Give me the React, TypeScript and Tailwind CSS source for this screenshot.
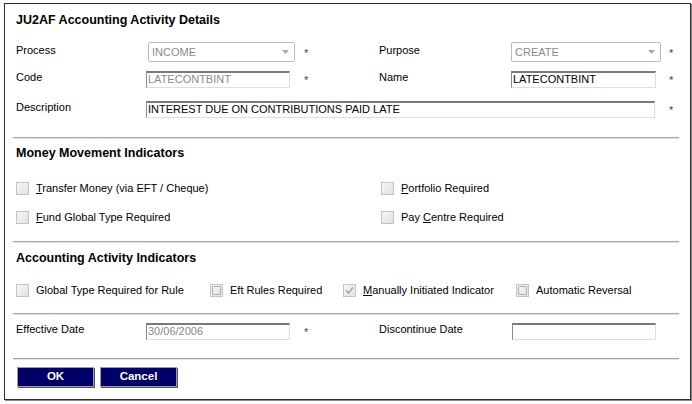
import React from "react";

const font = { fontFamily: '"Liberation Sans", Arial, sans-serif' };

function Star() {
  return <span className="text-[11px] leading-none text-[#444]">*</span>;
}

function Select({ value, w }: { value: string; w: string }) {
  return (
    <div className={`${w} h-[20px] flex items-center justify-between rounded-[2px] border border-[#bcbcbc] bg-white pl-[3px] pr-[5px]`}>
      <span className="text-[11px] text-[#8a8a8a]">{value}</span>
      <svg width="7" height="4" viewBox="0 0 7 4">
        <path d="M0 0 L7 0 L3.5 4 Z" fill="#a8a8a8" />
      </svg>
    </div>
  );
}

function Input({ value, w, disabled }: { value?: string; w: string; disabled?: boolean }) {
  return (
    <div
      className={`${w} h-[17px] flex items-center border-t-2 border-l border-t-[#7a7a7a] border-l-[#8a8a8a] border-r border-b border-r-[#dedede] border-b-[#dedede] bg-white pl-[1px] text-[11px] leading-none ${
        disabled ? "text-[#8a8a8a]" : "text-black"
      }`}
    >
      {value}
    </div>
  );
}

function Box({ checked, ring }: { checked?: boolean; ring?: boolean }) {
  return (
    <div className="w-[13px] h-[13px] border border-[#c4c4c4] bg-gradient-to-br from-[#f6f6f6] to-[#e2e2e2] flex items-center justify-center shrink-0">
      {ring && <div className="w-[9px] h-[9px] border border-[#b0b0b0] rounded-[1px]" />}
      {checked && (
        <svg width="9" height="9" viewBox="0 0 9 9">
          <path d="M1 4.5 L3.5 7 L8 1.5" fill="none" stroke="#a0a0a0" strokeWidth="1.4" />
        </svg>
      )}
    </div>
  );
}

function Check({
  children,
  w,
  checked,
  ring,
}: {
  children: React.ReactNode;
  w?: string;
  checked?: boolean;
  ring?: boolean;
}) {
  return (
    <div className={`${w ?? ""} flex items-center gap-[7px] shrink-0`}>
      <Box checked={checked} ring={ring} />
      <span className="text-[11px] text-black whitespace-nowrap">{children}</span>
    </div>
  );
}

function Sep() {
  return <div className="ml-[-3px] w-[666px] h-[2px] border-t border-t-[#a4a4a4] border-b border-b-[#e6e6e6]" />;
}

function Title({ children, h }: { children: React.ReactNode; h: string }) {
  return <div className={`${h} flex items-center text-[12.5px] font-bold text-black`}>{children}</div>;
}

function Label({ children, w }: { children: React.ReactNode; w: string }) {
  return <div className={`${w} shrink-0 text-[11px] text-black pb-[3px]`}>{children}</div>;
}

export default function App() {
  return (
    <div className="w-[692px] h-[404px] bg-white pt-[3px] pl-[4px]" style={font}>
      <div className="w-[687px] h-[397px] border border-[#2e2e2e] shadow-[1px_1px_0_#8a8a8a] bg-white pl-[11px] flex flex-col">
        <Title h="h-[32px]">JU2AF Accounting Activity Details</Title>

        {/* Row 1 */}
        <div className="mt-[6px] h-[20px] flex items-center">
          <div className="w-[363px] flex items-center">
            <Label w="w-[132px]">Process</Label>
            <Select value="INCOME" w="w-[147px]" />
            <span className="ml-[9px]"><Star /></span>
          </div>
          <Label w="w-[132px]">Purpose</Label>
          <Select value="CREATE" w="w-[150px]" />
          <span className="ml-[8px]"><Star /></span>
        </div>

        {/* Row 2 */}
        <div className="mt-[8px] h-[18px] flex items-center">
          <div className="w-[363px] flex items-center">
            <Label w="w-[130px]">Code</Label>
            <Input value="LATECONTBINT" w="w-[144px]" disabled />
            <span className="ml-[14px]"><Star /></span>
          </div>
          <Label w="w-[132px]">Name</Label>
          <Input value="LATECONTBINT" w="w-[145px]" />
          <span className="ml-[13px]"><Star /></span>
        </div>

        {/* Row 3 */}
        <div className="mt-[12px] h-[18px] flex items-center">
          <Label w="w-[130px]">Description</Label>
          <Input value="INTEREST DUE ON CONTRIBUTIONS PAID LATE" w="w-[509px]" />
          <span className="ml-[14px]"><Star /></span>
        </div>

        <div className="mt-[19px]">
          <Sep />
        </div>
        <Title h="h-[28px]">Money Movement Indicators</Title>

        <div className="mt-[12px] h-[18px] flex items-center">
          <Check w="w-[365px]">
            <span className="underline">T</span>ransfer Money (via EFT / Cheque)
          </Check>
          <Check>
            <span className="underline">P</span>ortfolio Required
          </Check>
        </div>
        <div className="mt-[11px] h-[18px] flex items-center">
          <Check w="w-[365px]">
            <span className="underline">F</span>und Global Type Required
          </Check>
          <Check>
            Pay <span className="underline">C</span>entre Required
          </Check>
        </div>

        <div className="mt-[15px]">
          <Sep />
        </div>
        <Title h="h-[31px]">Accounting Activity Indicators</Title>

        <div className="mt-[7px] h-[18px] flex items-center">
          <Check w="w-[194px]">Global Type Required for Rule</Check>
          <Check w="w-[133px]" ring>
            Eft Rules Required
          </Check>
          <Check w="w-[173px]" checked>
            <span className="underline">M</span>anually Initiated Indicator
          </Check>
          <Check ring>Automatic Reversal</Check>
        </div>

        <div className="mt-[14px]">
          <Sep />
        </div>

        <div className="mt-[7px] h-[18px] flex items-center">
          <div className="w-[363px] flex items-center">
            <Label w="w-[130px]">Effective Date</Label>
            <Input value="30/06/2006" w="w-[144px]" disabled />
            <span className="ml-[14px]"><Star /></span>
          </div>
          <Label w="w-[133px]">Discontinue Date</Label>
          <Input w="w-[144px]" />
        </div>

        <div className="mt-[18px]">
          <Sep />
        </div>

        <div className="mt-[7px] pl-[1px] flex gap-[6px]">
          <button className="w-[77px] h-[20px] bg-[#000066] border border-[#9a9aaa] shadow-[1px_1px_0_#555] text-white text-[11.5px] font-bold">
            OK
          </button>
          <button className="w-[77px] h-[20px] bg-[#000066] border border-[#9a9aaa] shadow-[1px_1px_0_#555] text-white text-[11.5px] font-bold">
            Cancel
          </button>
        </div>
      </div>
    </div>
  );
}
